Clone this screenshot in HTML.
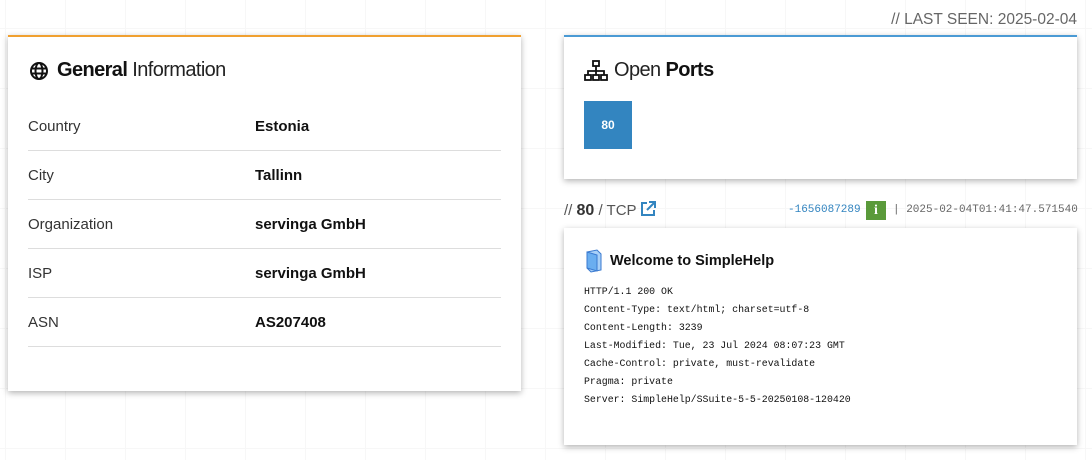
<!DOCTYPE html>
<html><head><meta charset="utf-8"><style>
*{margin:0;padding:0;box-sizing:border-box}
body{width:1092px;height:460px;background:#fff;position:relative;overflow:hidden;font-family:"Liberation Sans",sans-serif;color:#222;
background-image:linear-gradient(#f7f7f7 1px,transparent 1px),linear-gradient(90deg,#f7f7f7 1px,transparent 1px);background-size:60px 60px;background-position:0 28px,5px 0}
.card{position:absolute;background:#fff;box-shadow:0 2px 6px rgba(0,0,0,.3)}
.h{position:absolute;font-size:20px;letter-spacing:-0.6px;color:#222;display:flex;align-items:center}
.h b{color:#111}
.row{position:absolute;left:20px;width:473px;height:49px;border-bottom:1px solid #ddd;font-size:15px}
.row span{position:absolute;top:16px;color:#333}
.row b{position:absolute;left:227px;top:16px;color:#111}
pre{font-family:"Liberation Mono",monospace;font-size:9.9px;line-height:18px;color:#111}
</style></head><body>
<div style="position:absolute;right:15px;top:11px;font-size:15.5px;color:#666">// LAST SEEN: 2025-02-04</div>

<div class="card" style="left:8px;top:35px;width:513px;height:356px;border-top:2px solid #f0a030">
 <div class="h" style="left:21px;top:22px">
  <svg width="20" height="20" viewBox="0 0 20 20" style="margin-right:8px"><g fill="none" stroke="#111" stroke-width="2"><circle cx="10" cy="10" r="8"/><ellipse cx="10" cy="10" rx="3.5" ry="8"/><line x1="2" y1="7.5" x2="18" y2="7.5"/><line x1="2" y1="12.5" x2="18" y2="12.5"/></g></svg>
  <b>General</b>&nbsp;Information</div>
 <div class="row" style="top:65px"><span>Country</span><b>Estonia</b></div>
 <div class="row" style="top:114px"><span>City</span><b>Tallinn</b></div>
 <div class="row" style="top:163px"><span>Organization</span><b>servinga GmbH</b></div>
 <div class="row" style="top:212px"><span>ISP</span><b>servinga GmbH</b></div>
 <div class="row" style="top:261px"><span>ASN</span><b>AS207408</b></div>
</div>

<div class="card" style="left:564px;top:35px;width:513px;height:144px;border-top:2px solid #4a9ad4">
 <div class="h" style="left:20px;top:22px">
  <svg width="24" height="22" viewBox="0 0 24 22" style="margin-right:6px"><g fill="none" stroke="#111" stroke-width="1.8"><rect x="9" y="1" width="6" height="5"/><rect x="1" y="15" width="6" height="5"/><rect x="9" y="15" width="6" height="5"/><rect x="17" y="15" width="6" height="5"/><path d="M12 6v5M4 15v-4h16v4M12 11v4"/></g></svg>
  Open&nbsp;<b>Ports</b></div>
 <div style="position:absolute;left:20px;top:64px;width:48px;height:48px;background:#3385c0;color:#fff;font-weight:bold;font-size:12px;text-align:center;line-height:48px">80</div>
</div>

<div style="position:absolute;left:564px;top:201px;font-size:15px;color:#555">// <b style="color:#333;font-size:16px">80</b> / TCP
<svg width="16" height="16" viewBox="0 0 16 16" style="vertical-align:-2px"><g fill="none" stroke="#3385c0" stroke-width="2"><path d="M7 2H2v12h12V9"/><path d="M9 1h6v6M15 1L7 9"/></g></svg></div>
<div style="position:absolute;left:788px;top:204px;font-family:'Liberation Mono',monospace;font-size:11px;color:#3385c0">-1656087289</div>
<div style="position:absolute;left:866px;top:201px;width:20px;height:19px;background:#5a9a3a;color:#fff;font-weight:bold;text-align:center;font-size:14px;line-height:19px;font-family:'Liberation Serif',serif">i</div>
<div style="position:absolute;left:893px;top:204px;font-family:'Liberation Mono',monospace;font-size:11px;color:#666">| 2025-02-04T01:41:47.571540</div>

<div class="card" style="left:564px;top:228px;width:513px;height:217px">
 <div style="position:absolute;left:20px;top:21px;display:flex;align-items:center;font-weight:bold;font-size:14.5px;color:#111">
  <svg width="20" height="24" viewBox="0 0 20 24" style="margin-right:6px"><path d="M3 3l10-2 4 4v16l-10 2-4-4z" fill="#a8d0f8" stroke="#3a7ad0" stroke-width="1"/><path d="M3 3l10 3v16L3 19z" fill="#6aaef0" stroke="#3a7ad0" stroke-width="1"/></svg>
  Welcome to SimpleHelp</div>
 <pre style="position:absolute;left:20px;top:55px">HTTP/1.1 200 OK
Content-Type: text/html; charset=utf-8
Content-Length: 3239
Last-Modified: Tue, 23 Jul 2024 08:07:23 GMT
Cache-Control: private, must-revalidate
Pragma: private
Server: SimpleHelp/SSuite-5-5-20250108-120420</pre>
</div>
</body></html>
